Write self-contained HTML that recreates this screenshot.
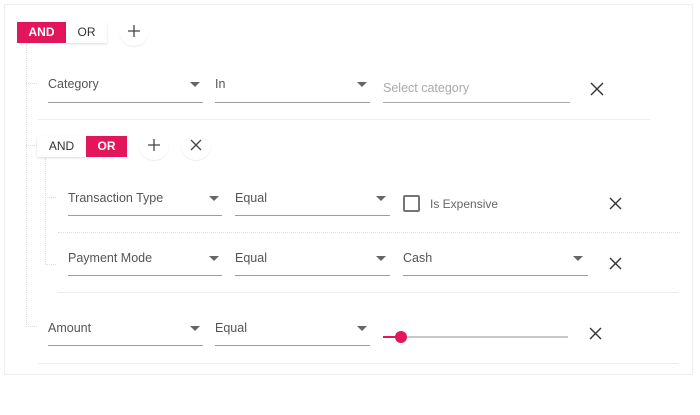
<!DOCTYPE html>
<html><head><style>
*{margin:0;padding:0;box-sizing:border-box}
body{width:700px;height:415px;background:#fff;position:relative;font-family:"Liberation Sans",Arial,sans-serif;overflow:hidden}
.a{position:absolute}
.box{left:4px;top:4px;width:689px;height:371px;border:1px solid #eee}
.t{position:absolute;font-size:12.5px;color:#555;white-space:nowrap}
.u{position:absolute;height:1px;background:#9e9e9e}
.arr{position:absolute;width:0;height:0;border-left:5px solid transparent;border-right:5px solid transparent;border-top:5px solid #666}
.vd{position:absolute;width:0;border-left:1px dotted #ddd}
.hd{position:absolute;height:0;border-top:1px dotted #ddd}
.sep{position:absolute;height:1px;background:#eeeeee}
.btn{position:absolute;font-size:12px;text-align:center;line-height:21px;height:21px}
.pk{background:#e3165b;color:#fff;font-weight:bold}
.wh{background:#fff;color:#333;box-shadow:0 1px 2px rgba(0,0,0,.15)}
.circ{position:absolute;width:30px;height:30px;border-radius:50%;box-shadow:0 1px 1px rgba(0,0,0,.08)}
</style></head><body>
<div class="a box"></div>

<div class="btn pk" style="left:17px;top:22px;width:49px">AND</div>
<div class="btn wh" style="left:66px;top:22px;width:41px">OR</div>
<div class="circ" style="left:119px;top:16px"></div>
<svg class="a" style="left:127px;top:24px" width="14" height="14"><path d="M7 1V13M1 7H13" stroke="#444" stroke-width="1.3"/></svg>

<div class="vd" style="left:26px;top:44px;height:283px"></div>
<div class="hd" style="left:26px;top:83px;width:11px"></div>
<div class="hd" style="left:26px;top:145px;width:11px"></div>
<div class="hd" style="left:26px;top:326px;width:11px"></div>

<div class="t" style="left:48px;top:77px">Category</div><div class="arr" style="left:190px;top:82px"></div><div class="u" style="left:48px;top:102px;width:155px"></div>
<div class="t" style="left:215px;top:77px">In</div><div class="arr" style="left:357px;top:82px"></div><div class="u" style="left:215px;top:102px;width:155px"></div>
<div class="t" style="left:383px;top:81px;color:#aaa">Select category</div><div class="u" style="left:383px;top:102px;width:187px;background:#aaa"></div>
<svg class="a" style="left:590px;top:82px" width="14" height="14"><path d="M1 1L13 13M13 1L1 13" stroke="#333" stroke-width="1.4"/></svg>
<div class="sep" style="left:38px;top:119px;width:612px"></div>

<div class="btn wh" style="left:37px;top:136px;width:49px;font-weight:normal">AND</div>
<div class="btn pk" style="left:86px;top:136px;width:41px">OR</div>
<div class="circ" style="left:139px;top:130px"></div>
<svg class="a" style="left:147px;top:138px" width="14" height="14"><path d="M7 1V13M1 7H13" stroke="#444" stroke-width="1.3"/></svg>
<div class="circ" style="left:181px;top:130px"></div>
<svg class="a" style="left:190px;top:139px" width="12" height="12"><path d="M1 1L11 11M11 1L1 11" stroke="#444" stroke-width="1.3"/></svg>

<div class="vd" style="left:45px;top:158px;height:106px"></div>
<div class="hd" style="left:45px;top:197px;width:11px"></div>
<div class="hd" style="left:45px;top:264px;width:11px"></div>

<div class="t" style="left:68px;top:191px">Transaction Type</div><div class="arr" style="left:209px;top:196px"></div><div class="u" style="left:68px;top:215px;width:154px"></div>
<div class="t" style="left:235px;top:191px">Equal</div><div class="arr" style="left:376px;top:196px"></div><div class="u" style="left:235px;top:215px;width:155px"></div>
<div class="a" style="left:403px;top:195px;width:17px;height:17px;border:2px solid #757575;border-radius:2px"></div>
<div class="t" style="left:430px;top:197px;font-size:12px;color:#666">Is Expensive</div>
<svg class="a" style="left:609px;top:197px" width="13" height="13"><path d="M1 1L12 12M12 1L1 12" stroke="#333" stroke-width="1.4"/></svg>
<div class="hd" style="left:58px;top:232px;width:622px"></div>

<div class="t" style="left:68px;top:251px">Payment Mode</div><div class="arr" style="left:209px;top:256px"></div><div class="u" style="left:68px;top:275px;width:154px"></div>
<div class="t" style="left:235px;top:251px">Equal</div><div class="arr" style="left:376px;top:256px"></div><div class="u" style="left:235px;top:275px;width:155px"></div>
<div class="t" style="left:403px;top:251px">Cash</div><div class="arr" style="left:573px;top:256px"></div><div class="u" style="left:403px;top:275px;width:185px"></div>
<svg class="a" style="left:609px;top:257px" width="13" height="13"><path d="M1 1L12 12M12 1L1 12" stroke="#333" stroke-width="1.4"/></svg>
<div class="sep" style="left:58px;top:292px;width:620px"></div>

<div class="t" style="left:48px;top:321px">Amount</div><div class="arr" style="left:190px;top:326px"></div><div class="u" style="left:48px;top:345px;width:155px"></div>
<div class="t" style="left:215px;top:321px">Equal</div><div class="arr" style="left:357px;top:326px"></div><div class="u" style="left:215px;top:345px;width:155px"></div>
<div class="a" style="left:383px;top:336px;width:185px;height:2px;background:#c8c8c8"></div>
<div class="a" style="left:383px;top:336px;width:18px;height:2px;background:#e3165b"></div>
<div class="a" style="left:395px;top:331px;width:12px;height:12px;border-radius:50%;background:#e3165b"></div>
<svg class="a" style="left:589px;top:327px" width="13" height="13"><path d="M1 1L12 12M12 1L1 12" stroke="#333" stroke-width="1.4"/></svg>
<div class="sep" style="left:38px;top:363px;width:640px"></div>
</body></html>
